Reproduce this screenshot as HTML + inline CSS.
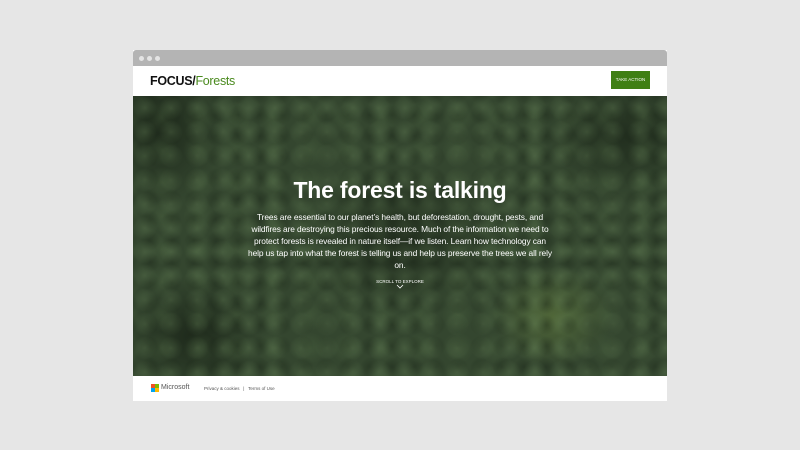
<!DOCTYPE html>
<html><head><meta charset="utf-8"><style>
*{margin:0;padding:0;box-sizing:border-box}
body{width:800px;height:450px;background:#e6e6e6;font-family:"Liberation Sans",sans-serif;position:relative;overflow:hidden}
.frame{position:absolute;left:133px;top:50px;width:534px;height:351px;background:#fff}
.bar{height:16px;background:#b4b4b4;border-radius:3px 3px 0 0;position:relative}
.bar i{position:absolute;top:6px;width:5px;height:5px;border-radius:50%;background:#e4e4e4}
.hdr{height:30px;position:relative;background:#fff}
.logo{position:absolute;left:17px;top:8px;font-size:12.5px;color:#111;letter-spacing:-0.3px}
.logo b{font-weight:bold}
.logo span{color:#4a8a1e}
.btn{position:absolute;right:17px;top:5px;width:39px;height:18px;background:#3f7f14;color:#fff;font-size:4.5px;text-align:center;line-height:18px}
.hero{position:absolute;top:46px;left:0;width:534px;height:280px;overflow:hidden;
background:
radial-gradient(ellipse 120px 90px at 267px 140px,rgba(20,28,18,.5) 0%,transparent 80%),
radial-gradient(circle 12px at 12px 12px,rgba(110,140,95,.3),transparent 100%) 0 0/26px 24px,
radial-gradient(circle 10px at 10px 10px,rgba(20,30,18,.35),transparent 100%) 7px 9px/22px 21px,
radial-gradient(circle 16px at 16px 16px,rgba(95,125,80,.25),transparent 100%) 13px 5px/37px 33px,
radial-gradient(ellipse 60px 80px at 30px 30px,rgba(15,22,14,.6),transparent 100%),
radial-gradient(ellipse 70px 60px at 60px 240px,rgba(15,22,14,.6),transparent 100%),
radial-gradient(ellipse 80px 60px at 490px 40px,rgba(15,22,14,.5),transparent 100%),
radial-gradient(ellipse 60px 50px at 420px 220px,rgba(120,150,70,.4),transparent 100%),
#34462f}
.hero .t{position:absolute;left:0;width:534px;top:81px;text-align:center;color:#fff;font-size:23px;font-weight:bold;letter-spacing:-0.2px}
.hero p{position:absolute;left:0;width:534px;top:115px;text-align:center;color:#fff;font-size:8.4px;line-height:12.1px;white-space:nowrap;letter-spacing:-0.1px}
.hero .s{position:absolute;left:0;width:534px;top:183px;text-align:center;color:#fff;font-size:4.5px}
.ftr{position:absolute;top:326px;left:0;width:534px;height:25px;background:#fff}
.ms{position:absolute;left:18px;top:8px;width:8px;height:8px}
.ms b{position:absolute;width:3.6px;height:3.6px}
.ftr .n{position:absolute;left:28px;top:8px;font-size:7px;color:#555}
.ftr .l{position:absolute;left:71px;top:10px;font-size:4.5px;color:#555}
</style></head><body>
<div class="frame">
<div class="bar"><i style="left:6px"></i><i style="left:14px"></i><i style="left:22px"></i></div>
<div class="hdr"><div class="logo"><b>FOCUS/</b><span>Forests</span></div><div class="btn">TAKE ACTION</div></div>
<div class="hero">
<div class="t">The forest is talking</div>
<p>Trees are essential to our planet’s health, but deforestation, drought, pests, and<br>wildfires are destroying this precious resource. Much of the information we need to<br>protect forests is revealed in nature itself—if we listen. Learn how technology can<br>help us tap into what the forest is telling us and help us preserve the trees we all rely<br>on.</p>
<div class="s">SCROLL TO EXPLORE<br><svg width="8" height="5" viewBox="0 0 8 5"><path d="M1 1L4 4L7 1" stroke="#fff" fill="none" stroke-width="0.8"/></svg></div>
</div>
<div class="ftr">
<div class="ms"><b style="left:0;top:0;background:#f25022"></b><b style="left:4.4px;top:0;background:#7fba00"></b><b style="left:0;top:4.4px;background:#00a4ef"></b><b style="left:4.4px;top:4.4px;background:#ffb900"></b></div>
<div class="n">Microsoft</div>
<div class="l">Privacy &amp; cookies &nbsp;&nbsp;|&nbsp;&nbsp; Terms of Use</div>
</div>
</div>
</body></html>
